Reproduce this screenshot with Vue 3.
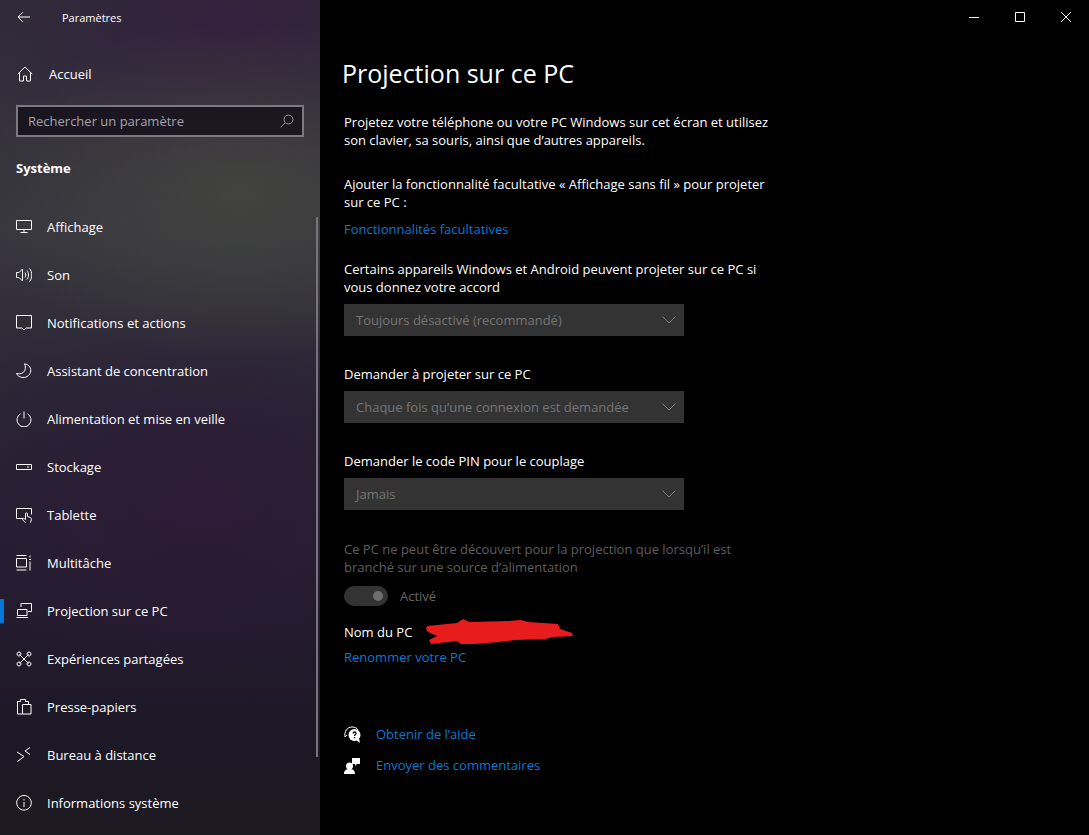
<script setup>
const items = [
  { label: 'Affichage', icon: 'M.5 1.5h15v9H.5zM8 10.5v3M4.5 13.5h7', x: 48 },
  { label: 'Son', icon: 'M.5 5.5h2.5L6.5 2v12L3 10.5H.5zM9 5.5c1 1.500 1 3.500 0 5M11 3.500c2 2.500 2 6.500 0 9M13.500 1.500c3 3.500 3 9.500 0 13', x: 47 },
  { label: 'Notifications et actions', icon: 'M.5 .5h15v12.500H10l-2 2-2-2H.5z', x: 47 },
  { label: 'Assistant de concentration', icon: 'M8.500 .8c5 .7 7 5 6 8.500-1 3.500-5 6-9 5-2.500-.6-4.300-2-5-3.800 4 1 7-.3 8.300-3 1-2.400.7-4.700-.3-6.700z', x: 48 },
  { label: 'Alimentation et mise en veille', icon: 'M4.500 2.800a7 7 0 1 0 7 0M8 .5v7', x: 48 },
  { label: 'Stockage', icon: 'M.5 5.500h15v5H.5zM11 8h2', x: 47 },
  { label: 'Tablette', icon: 'M7 11.500H.5v-10h15v6M9.500 15.500c-1.500-1-3-2.500-3-3.500s1-1 3 .5V7c0-1.500 2-1.500 2 0v2.500l3 1c1 .5 1 1.500.8 2.500l-.8 2.500', x: 48 },
  { label: 'Multitâche', icon: 'M.5 3.500h10v8.500H.5zM.5 .5h10M.5 15h10M14 .5v2M14 6.500v9M13 4.500h2', x: 47 },
  { label: 'Projection sur ce PC', icon: 'M5 4V.5h10.500v8H12M1.500 6.500h9.500v6H1.500zM.5 14.500h11.500', x: 47, active: true },
  { label: 'Expériences partagées', icon: 'M3.500 3.500l9 9M12.500 3.500l-9 9M3 1a2 2 0 1 0 .01 0zM13 1a2 2 0 1 0 .01 0zM3 11a2 2 0 1 0 .01 0zM13 11a2 2 0 1 0 .01 0z', x: 47 },
  { label: 'Presse-papiers', icon: 'M1.500 2.500h3v-2h5v2h3v3M1.500 2.500v12.500h5M6.500 5.500h8.500v9.500H6.500z', x: 47 },
  { label: 'Bureau à distance', icon: 'M1 5l7 4.500-6.500 5M14 .5L9 4l5 3.500', x: 47 },
  { label: 'Informations système', icon: 'M8 .5a7.300 7.300 0 1 0 .01 0zM8 7v5M8 4v1.500', x: 47 },
]
</script>

<template>
  <div class="window">
    <aside class="side">
      <div class="head">
        <svg class="back" width="14" height="12" viewBox="0 0 14 12" fill="none" stroke="#fff"><path d="M13 6H1M6 1L1 6l5 5" /></svg>
        <span class="app">Paramètres</span>
      </div>
      <div class="home">
        <svg class="ico" width="16" height="16" viewBox="0 0 16 16" fill="none" stroke="#fff"><path d="M.8 8L8 1l7.200 7M2.500 6.500v8.500h4v-5h3v5h4V6.500" /></svg>
        <span>Accueil</span>
      </div>
      <div class="search">
        <span>Rechercher un paramètre</span>
        <svg width="14" height="14" viewBox="0 0 14 14" fill="none" stroke="#9a979f"><circle cx="8.500" cy="5.500" r="4.500" /><path d="M5.300 8.700L.7 13.300" /></svg>
      </div>
      <h2 class="sys">Système</h2>
      <nav class="nav">
        <div v-for="it in items" :key="it.label" class="item" :class="{ on: it.active }">
          <svg class="ico" width="16" height="16" viewBox="0 0 16 16" fill="none" stroke="#fff"><path :d="it.icon" /></svg>
          <span>{{ it.label }}</span>
        </div>
      </nav>
      <div class="scroll"></div>
    </aside>

    <main class="main">
      <div class="controls">
        <svg width="10" height="10" viewBox="0 0 10 10" stroke="#fff" fill="none"><path d="M0 5.500h10" /></svg>
        <svg width="10" height="10" viewBox="0 0 10 10" stroke="#fff" fill="none"><path d="M.5 .5h9v9h-9z" /></svg>
        <svg width="10" height="10" viewBox="0 0 10 10" stroke="#fff" fill="none"><path d="M0 0l10 10M10 0L0 10" /></svg>
      </div>
      <h1 class="title">Projection sur ce PC</h1>
      <p class="t p1">Projetez votre téléphone ou votre PC Windows sur cet écran et utilisez son clavier, sa souris, ainsi que d’autres appareils.</p>
      <p class="t p2">Ajouter la fonctionnalité facultative « Affichage sans fil » pour projeter sur ce PC :</p>
      <a class="t link l1">Fonctionnalités facultatives</a>
      <p class="t p3">Certains appareils Windows et Android peuvent projeter sur ce PC si vous donnez votre accord</p>
      <div class="select"><span>Toujours désactivé (recommandé)</span><svg width="14" height="8" viewBox="0 0 14 8" fill="none" stroke="#7d7d7d"><path d="M.5 .5L7 7l6.500-6.500" /></svg></div>
      <p class="t lab">Demander à projeter sur ce PC</p>
      <div class="select"><span>Chaque fois qu’une connexion est demandée</span><svg width="14" height="8" viewBox="0 0 14 8" fill="none" stroke="#7d7d7d"><path d="M.5 .5L7 7l6.500-6.500" /></svg></div>
      <p class="t lab">Demander le code PIN pour le couplage</p>
      <div class="select"><span>Jamais</span><svg width="14" height="8" viewBox="0 0 14 8" fill="none" stroke="#7d7d7d"><path d="M.5 .5L7 7l6.500-6.500" /></svg></div>
      <p class="t dis">Ce PC ne peut être découvert pour la projection que lorsqu’il est branché sur une source d’alimentation</p>
      <div class="toggle-row">
        <span class="toggle"><i></i></span>
        <span class="t on-label">Activé</span>
      </div>
      <div class="t pc">
        <span>Nom du PC</span>
        <svg class="redact" width="150" height="28" viewBox="0 0 150 28"><path fill="#e81c1c" d="M3 9l30-3 6-4 6 3 40-1 12-1 7 2 30 2 2 5 12 4 1 3-20 1-8 2-30 1-16 2-24 2-14 0-4-3-26 3-2-4 8-4-9-4-2-3z" /></svg>
      </div>
      <a class="t link l2">Renommer votre PC</a>
      <div class="help h1">
        <svg width="17" height="17" viewBox="0 0 17 17"><path fill="none" stroke="#fff" d="M1 11C0 6 3 1 8 1c3 0 5 1 6 3M1 11l2-2" /><circle cx="10.500" cy="9" r="6" fill="#fff" /><path fill="#fff" d="M12 14l4 3-1-5z" /><path fill="none" stroke="#000" stroke-width="1.300" d="M9 7.500c0-2 3-2 3 0 0 1.200-1.500 1-1.500 2.500M10.500 11v1.300" /></svg>
        <a class="t link">Obtenir de l’aide</a>
      </div>
      <div class="help h2">
        <svg width="17" height="17" viewBox="0 0 17 17" fill="#fff"><circle cx="5.500" cy="9" r="3.500" /><path d="M0 17c0-4 2.500-5 5.500-5s5.500 1 5.500 5zM8 1h8v6h-3l-2 2V7H8z" /></svg>
        <a class="t link">Envoyer des commentaires</a>
      </div>
    </main>
  </div>
</template>

<style scoped>
.window {
  display: flex;
  width: 1089px;
  height: 835px;
  overflow: hidden;
  background: #000;
  color: #fff;
  font-family: "Open Sans", "Noto Sans", sans-serif;
  font-size: 13px;
}
.side {
  position: relative;
  flex: 0 0 320px;
  height: 835px;
  box-sizing: border-box;
  background:
    radial-gradient(ellipse 260px 170px at 240px 190px, rgba(68, 70, 64, .85), rgba(68, 70, 64, 0)),
    radial-gradient(ellipse 260px 160px at 230px 40px, rgba(52, 30, 62, .9), rgba(52, 30, 62, 0)),
    radial-gradient(ellipse 300px 200px at 200px 500px, rgba(46, 26, 56, .8), rgba(46, 26, 56, 0)),
    linear-gradient(180deg, #2f2c38 0%, #38363f 28%, #2a2635 48%, #251d30 68%, #1d1826 88%, #1c1a22 100%);
}
.head {
  display: flex;
  align-items: center;
  height: 34px;
  padding-left: 17px;
}
.back { flex: none; }
.app { margin-left: 31px; font-size: 11px; }
.home {
  display: flex;
  align-items: center;
  height: 24px;
  margin-top: 28px;
  padding-left: 17px;
}
.home span { margin-left: 16px; }
.search {
  display: flex;
  align-items: center;
  justify-content: space-between;
  box-sizing: border-box;
  width: 288px;
  height: 32px;
  margin: 19px 0 0 16px;
  padding: 0 8px 0 10px;
  border: 2px solid #7b7982;
  background: rgba(18, 14, 24, .75);
  color: #a5a3aa;
}
.sys {
  margin: 22px 0 0 16px;
  font-size: 13px;
  line-height: 18px;
  font-weight: 700;
}
.nav { margin-top: 26px; }
.item {
  position: relative;
  display: flex;
  align-items: center;
  height: 48px;
  padding-left: 16px;
}
.item span { margin-left: 15px; }
.item.on::before {
  content: "";
  position: absolute;
  left: 0;
  top: 12px;
  width: 4px;
  height: 24px;
  background: #0078d7;
}
.ico { flex: none; }
.scroll {
  position: absolute;
  left: 316px;
  top: 217px;
  width: 2px;
  height: 540px;
  background: #77757b;
}
.main {
  position: relative;
  flex: 1;
  padding-left: 24px;
}
.controls {
  position: absolute;
  top: 12px;
  right: 18px;
  display: flex;
  gap: 36px;
}
.title {
  margin: 54px 0 0 -2px;
  font-size: 25px;
  line-height: 38px;
  font-weight: 400;
}
.t {
  display: block;
  margin: 0;
  width: 440px;
  line-height: 18px;
}
.p1 { margin-top: 21px; }
.p2 { margin-top: 26px; }
.l1 { margin-top: 9px; }
.p3 { margin-top: 22px; }
.link { color: #0a78d0; }
.select {
  display: flex;
  align-items: center;
  justify-content: space-between;
  box-sizing: border-box;
  width: 340px;
  height: 32px;
  margin-top: 8px;
  padding: 0 8px 0 12px;
  background: #333;
  color: #757575;
}
.lab { margin-top: 29px; }
.dis { margin-top: 30px; color: #5e5e5e; }
.toggle-row {
  display: flex;
  align-items: center;
  margin-top: 10px;
  height: 20px;
}
.toggle {
  position: relative;
  width: 44px;
  height: 20px;
  border-radius: 10px;
  background: #333;
}
.toggle i {
  position: absolute;
  right: 5px;
  top: 5px;
  width: 10px;
  height: 10px;
  border-radius: 50%;
  background: #6e6e6e;
}
.on-label { width: auto; margin-left: 12px; color: #666; }
.pc { position: relative; margin-top: 17px; }
.redact { position: absolute; left: 80px; top: -6px; }
.l2 { margin-top: 7px; }
.help {
  display: flex;
  align-items: center;
  gap: 15px;
}
.help svg { flex: none; }
.help .t { width: auto; }
.h1 { margin-top: 59px; }
.h2 { margin-top: 13px; }
</style>

<style>
html, body { margin: 0; background: #000; }
</style>
